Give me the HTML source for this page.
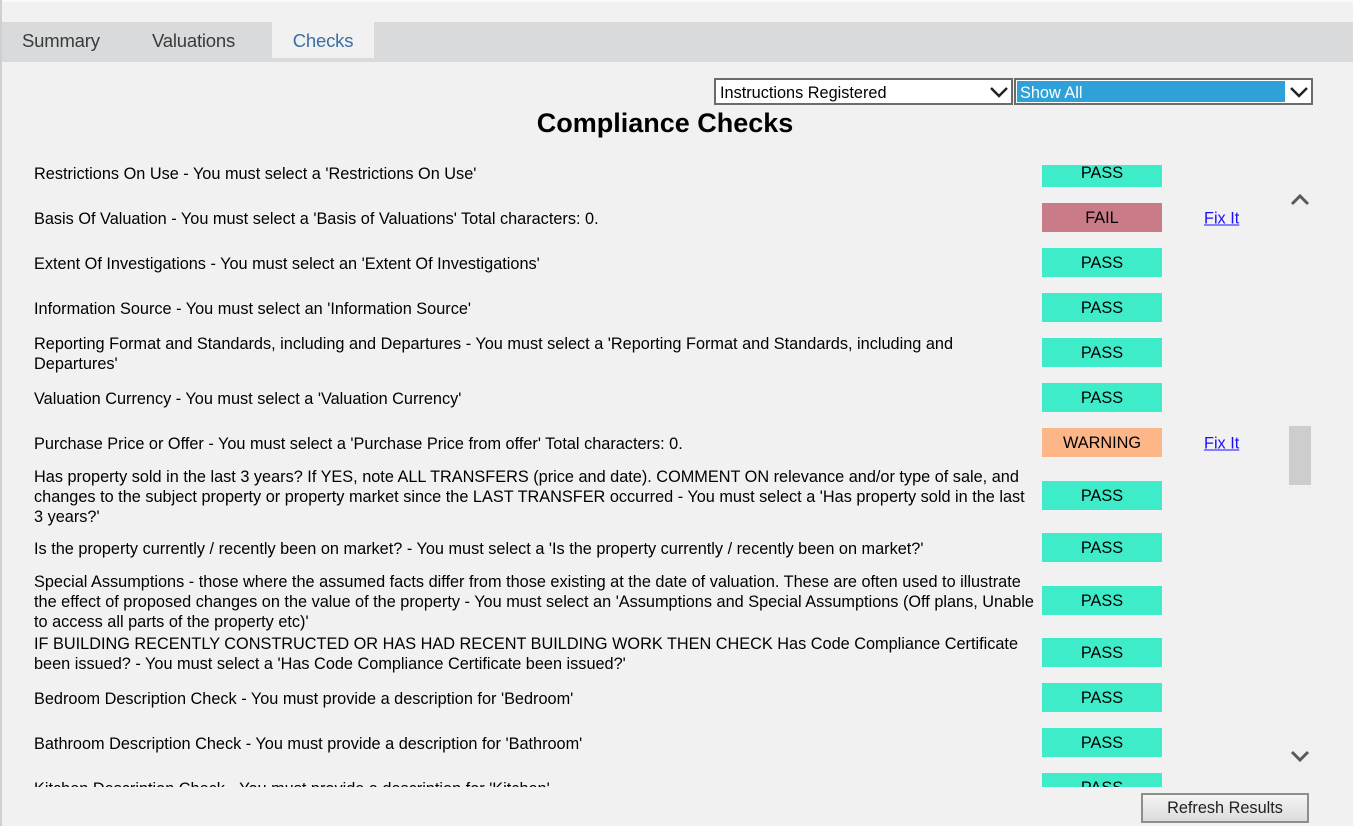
<!DOCTYPE html>
<html><head><meta charset="utf-8"><style>
*{margin:0;padding:0;box-sizing:border-box}
body{width:1353px;height:826px;background:#f1f1f1;font-family:"Liberation Sans",sans-serif;position:relative;overflow:hidden;color:#000}
.lb{position:absolute;left:0;top:0;width:2px;height:826px;background:#cfcfcf}
.tt{position:absolute;left:2px;top:0;right:0;height:2px;background:#fafafa}
.tabs{position:absolute;left:2px;top:22px;width:1351px;height:40px;background:#d9dadb}
.tab{position:absolute;top:0;height:36px;line-height:38px;font-size:18.5px;color:#3a3a3a;letter-spacing:-.2px}
.sel{position:absolute;top:78px;height:27px;border:2px solid #6b6b6b;background:#fff;font-size:16.3px}
.sel span{position:absolute;left:4px;top:4px}
.chev{position:absolute;right:2px;top:3px}
h1{position:absolute;left:0;width:1330px;text-align:center;top:108px;font-size:27px;font-weight:bold}
.clip{position:absolute;left:0;top:165px;width:1290px;height:622px;overflow:hidden}
.t{position:absolute;left:34px;width:1000px;font-size:16.3px;line-height:20px;transform:translateY(-50%);margin-top:1px}
.b{position:absolute;left:1042px;width:120px;height:29px;line-height:30px;text-align:center;font-size:16.3px}
.p{background:#3fecc9}.f{background:#c97b87}.w{background:#fdb688}
.fix{position:absolute;left:1204px;font-size:16.3px;color:#1a0dff;text-decoration:underline;transform:translateY(-50%);margin-top:1px}
.sb{position:absolute;left:1287px;top:165px;width:26px;height:622px;background:#f0f0f0}
.thumb{position:absolute;left:1289px;top:426px;width:22px;height:59px;background:#cdcdcd}
.btn{position:absolute;left:1141px;top:793px;width:168px;height:30px;border:2px solid #8d8d8d;background:linear-gradient(#f4f4f4,#dcdcdc);text-align:center;line-height:27px;font-size:16.3px;color:#222}
</style></head><body>
<div class="lb"></div><div class="tt"></div>
<div class="tabs">
<div class="tab" style="left:20px">Summary</div>
<div class="tab" style="left:150px">Valuations</div>
<div class="tab" style="left:270px;width:102px;background:#f1f1f1;text-align:center;color:#3a6ea5">Checks</div>
</div>
<div class="sel" style="left:714px;width:299px"><span>Instructions Registered</span><svg class="chev" width="20" height="18" viewBox="0 0 20 18"><path d="M2 5l8 8 8-8" fill="none" stroke="#222" stroke-width="2.5"/></svg></div>
<div class="sel" style="left:1014px;width:299px"><div style="position:absolute;left:1px;top:1px;width:268px;height:21px;background:#2fa1d9"></div><span style="color:#fff">Show All</span><svg class="chev" width="20" height="18" viewBox="0 0 20 18"><path d="M2 5l8 8 8-8" fill="none" stroke="#222" stroke-width="2.5"/></svg></div>
<h1>Compliance Checks</h1>
<div class="sb"></div><div class="thumb"></div>
<svg style="position:absolute;left:1290px;top:192px" width="20" height="16" viewBox="0 0 20 16"><path d="M2 12l8-8 8 8" fill="none" stroke="#5a5a5a" stroke-width="3"/></svg>
<svg style="position:absolute;left:1290px;top:748px" width="20" height="16" viewBox="0 0 20 16"><path d="M2 4l8 8 8-8" fill="none" stroke="#5a5a5a" stroke-width="3"/></svg>
<div class="clip">
<div class="t" style="top:8px">Restrictions On Use - You must select a 'Restrictions On Use'</div><div class="b p" style="top:-7px">PASS</div>
<div class="t" style="top:53px">Basis Of Valuation - You must select a 'Basis of Valuations' Total characters: 0.</div><div class="b f" style="top:38px">FAIL</div><div class="fix" style="top:53px">Fix It</div>
<div class="t" style="top:98px">Extent Of Investigations - You must select an 'Extent Of Investigations'</div><div class="b p" style="top:83px">PASS</div>
<div class="t" style="top:143px">Information Source - You must select an 'Information Source'</div><div class="b p" style="top:128px">PASS</div>
<div class="t" style="top:188px">Reporting Format and Standards, including and Departures - You must select a 'Reporting Format and Standards, including and Departures'</div><div class="b p" style="top:173px">PASS</div>
<div class="t" style="top:233px">Valuation Currency - You must select a 'Valuation Currency'</div><div class="b p" style="top:218px">PASS</div>
<div class="t" style="top:278px">Purchase Price or Offer - You must select a 'Purchase Price from offer' Total characters: 0.</div><div class="b w" style="top:263px">WARNING</div><div class="fix" style="top:278px">Fix It</div>
<div class="t" style="top:331px">Has property sold in the last 3 years? If YES, note ALL TRANSFERS (price and date). COMMENT ON relevance and/or type of sale, and changes to the subject property or property market since the LAST TRANSFER occurred - You must select a 'Has property sold in the last 3 years?'</div><div class="b p" style="top:316px">PASS</div>
<div class="t" style="top:383px">Is the property currently / recently been on market? - You must select a 'Is the property currently / recently been on market?'</div><div class="b p" style="top:368px">PASS</div>
<div class="t" style="top:436px">Special Assumptions - those where the assumed facts differ from those existing at the date of valuation. These are often used to illustrate the effect of proposed changes on the value of the property - You must select an 'Assumptions and Special Assumptions (Off plans, Unable to access all parts of the property etc)'</div><div class="b p" style="top:421px">PASS</div>
<div class="t" style="top:488px">IF BUILDING RECENTLY CONSTRUCTED OR HAS HAD RECENT BUILDING WORK THEN CHECK Has Code Compliance Certificate been issued? - You must select a 'Has Code Compliance Certificate been issued?'</div><div class="b p" style="top:473px">PASS</div>
<div class="t" style="top:533px">Bedroom Description Check - You must provide a description for 'Bedroom'</div><div class="b p" style="top:518px">PASS</div>
<div class="t" style="top:578px">Bathroom Description Check - You must provide a description for 'Bathroom'</div><div class="b p" style="top:563px">PASS</div>
<div class="t" style="top:623px">Kitchen Description Check - You must provide a description for 'Kitchen'</div><div class="b p" style="top:608px">PASS</div>
</div>
<div class="btn">Refresh Results</div>
</body></html>
